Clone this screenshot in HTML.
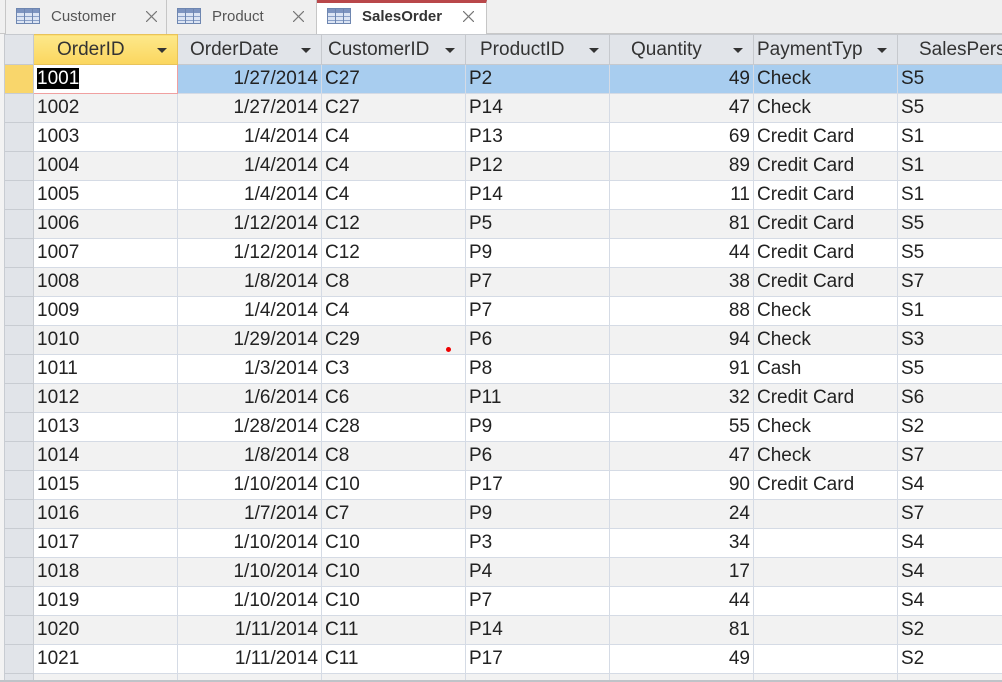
<!DOCTYPE html>
<html><head><style>
*{margin:0;padding:0;box-sizing:border-box}
body{width:1002px;height:682px;overflow:hidden;background:#f3f3f3;font-family:"Liberation Sans",sans-serif;position:relative}
.tabs{position:absolute;left:0;top:0;width:1002px;height:34px;background:#f0f0f0;border-bottom:1px solid #c8c8c8}
.tab{position:absolute;top:0;height:34px;background:#efefef;border-right:1px solid #c6c6c6;font-size:15px;color:#555}
.tab .ic{position:absolute;left:10px;top:8px;width:24px;height:16px;border:1px solid #6e86b0;background:
linear-gradient(90deg,transparent 7px,#6e86b0 7px,#6e86b0 8px,transparent 8px,transparent 15px,#6e86b0 15px,#6e86b0 16px,transparent 16px),
linear-gradient(#7d94c0 0,#7d94c0 4px,transparent 4px,transparent 7px,#8aa0c8 7px,#8aa0c8 8px,transparent 8px,transparent 11px,#8aa0c8 11px,#8aa0c8 12px,transparent 12px),#dbe4f3}
.tab .t{position:absolute;left:45px;top:8px}
.tab svg{position:absolute;top:11px}
.wrap{position:absolute;left:4px;top:34px;width:998px;height:646px;overflow:hidden}
table{border-collapse:collapse;table-layout:fixed;width:1037px;font-size:19px;color:#222}
td,th{height:29px;border:1px solid #d5dbe5;white-space:nowrap;overflow:hidden;padding:0 3px;font-weight:normal}
th{height:30px;background:#e1e4e9;color:#333;border-color:#c6c9ce;font-size:19px;position:relative;text-align:left}
th .a{position:absolute;right:10px;top:13px;width:0;height:0;border-left:5px solid transparent;border-right:5px solid transparent;border-top:5px solid #333}
td.s{background:#e1e4e9;border-color:#c8ccd2}
tr:nth-child(odd) td{background:#f2f2f2}
tr:nth-child(even) td{background:#fff}
tr:nth-child(odd) td.s,tr:nth-child(even) td.s{background:#e1e4e9}
td.r{text-align:right}
</style></head><body>
<div class="tabs">
<div class="tab" style="left:5px;width:162px;border-left:1px solid #c6c6c6"><div class="ic"></div><span class="t">Customer</span><svg style="left:140px" width="11" height="11"><path d="M0 0L11 11M11 0L0 11" stroke="#777" stroke-width="1.2"/></svg></div>
<div class="tab" style="left:167px;width:150px"><div class="ic"></div><span class="t">Product</span><svg style="left:126px" width="11" height="11"><path d="M0 0L11 11M11 0L0 11" stroke="#777" stroke-width="1.2"/></svg></div>
<div class="tab" style="left:317px;width:170px;background:#fff;border-top:3px solid #b9474a;height:35px"><div class="ic" style="top:5px"></div><span class="t" style="top:5px;font-weight:bold;color:#333">SalesOrder</span><svg style="left:146px;top:8px" width="11" height="11"><path d="M0 0L11 11M11 0L0 11" stroke="#777" stroke-width="1.2"/></svg></div>
</div>
<div class="wrap">
<table>
<colgroup><col style="width:29px"><col style="width:144px"><col style="width:144px"><col style="width:144px"><col style="width:144px"><col style="width:144px"><col style="width:144px"><col style="width:144px"></colgroup>
<tr><th style="background:#e1e4e9"></th><th style="background:linear-gradient(#fde88a,#fbd65e);border-color:#e8c35a;padding-left:23px">OrderID<span class="a"></span></th><th style="padding-left:12px">OrderDate<span class="a"></span></th><th style="padding-left:6px">CustomerID<span class="a"></span></th><th style="padding-left:14px">ProductID<span class="a"></span></th><th style="padding-left:21px">Quantity<span class="a"></span></th><th style="padding-left:3px">PaymentTyp<span class="a"></span></th><th style="padding-left:21px">SalesPers</th></tr>
<tr><td class="s" style="background:#f9d66b"></td><td style="background:#fff;border:1px solid #f0a0a0"><span style="background:#000;color:#fff">1001</span></td><td class="r" style="background:#a8cdef">1/27/2014</td><td style="background:#a8cdef">C27</td><td style="background:#a8cdef">P2</td><td class="r" style="background:#a8cdef">49</td><td style="background:#a8cdef">Check</td><td style="background:#a8cdef">S5</td></tr>
<tr><td class="s"></td><td>1002</td><td class="r">1/27/2014</td><td>C27</td><td>P14</td><td class="r">47</td><td>Check</td><td>S5</td></tr>
<tr><td class="s"></td><td>1003</td><td class="r">1/4/2014</td><td>C4</td><td>P13</td><td class="r">69</td><td>Credit Card</td><td>S1</td></tr>
<tr><td class="s"></td><td>1004</td><td class="r">1/4/2014</td><td>C4</td><td>P12</td><td class="r">89</td><td>Credit Card</td><td>S1</td></tr>
<tr><td class="s"></td><td>1005</td><td class="r">1/4/2014</td><td>C4</td><td>P14</td><td class="r">11</td><td>Credit Card</td><td>S1</td></tr>
<tr><td class="s"></td><td>1006</td><td class="r">1/12/2014</td><td>C12</td><td>P5</td><td class="r">81</td><td>Credit Card</td><td>S5</td></tr>
<tr><td class="s"></td><td>1007</td><td class="r">1/12/2014</td><td>C12</td><td>P9</td><td class="r">44</td><td>Credit Card</td><td>S5</td></tr>
<tr><td class="s"></td><td>1008</td><td class="r">1/8/2014</td><td>C8</td><td>P7</td><td class="r">38</td><td>Credit Card</td><td>S7</td></tr>
<tr><td class="s"></td><td>1009</td><td class="r">1/4/2014</td><td>C4</td><td>P7</td><td class="r">88</td><td>Check</td><td>S1</td></tr>
<tr><td class="s"></td><td>1010</td><td class="r">1/29/2014</td><td>C29</td><td>P6</td><td class="r">94</td><td>Check</td><td>S3</td></tr>
<tr><td class="s"></td><td>1011</td><td class="r">1/3/2014</td><td>C3</td><td>P8</td><td class="r">91</td><td>Cash</td><td>S5</td></tr>
<tr><td class="s"></td><td>1012</td><td class="r">1/6/2014</td><td>C6</td><td>P11</td><td class="r">32</td><td>Credit Card</td><td>S6</td></tr>
<tr><td class="s"></td><td>1013</td><td class="r">1/28/2014</td><td>C28</td><td>P9</td><td class="r">55</td><td>Check</td><td>S2</td></tr>
<tr><td class="s"></td><td>1014</td><td class="r">1/8/2014</td><td>C8</td><td>P6</td><td class="r">47</td><td>Check</td><td>S7</td></tr>
<tr><td class="s"></td><td>1015</td><td class="r">1/10/2014</td><td>C10</td><td>P17</td><td class="r">90</td><td>Credit Card</td><td>S4</td></tr>
<tr><td class="s"></td><td>1016</td><td class="r">1/7/2014</td><td>C7</td><td>P9</td><td class="r">24</td><td></td><td>S7</td></tr>
<tr><td class="s"></td><td>1017</td><td class="r">1/10/2014</td><td>C10</td><td>P3</td><td class="r">34</td><td></td><td>S4</td></tr>
<tr><td class="s"></td><td>1018</td><td class="r">1/10/2014</td><td>C10</td><td>P4</td><td class="r">17</td><td></td><td>S4</td></tr>
<tr><td class="s"></td><td>1019</td><td class="r">1/10/2014</td><td>C10</td><td>P7</td><td class="r">44</td><td></td><td>S4</td></tr>
<tr><td class="s"></td><td>1020</td><td class="r">1/11/2014</td><td>C11</td><td>P14</td><td class="r">81</td><td></td><td>S2</td></tr>
<tr><td class="s"></td><td>1021</td><td class="r">1/11/2014</td><td>C11</td><td>P17</td><td class="r">49</td><td></td><td>S2</td></tr>
<tr><td class="s"></td><td></td><td></td><td></td><td></td><td></td><td></td><td></td></tr>
</table>
</div>
<div style="position:absolute;left:0;top:680px;width:1002px;height:2px;background:#bfc3c8"></div>
<div style="position:absolute;left:446px;top:347px;width:5px;height:5px;border-radius:50%;background:#e00"></div>
</body></html>
